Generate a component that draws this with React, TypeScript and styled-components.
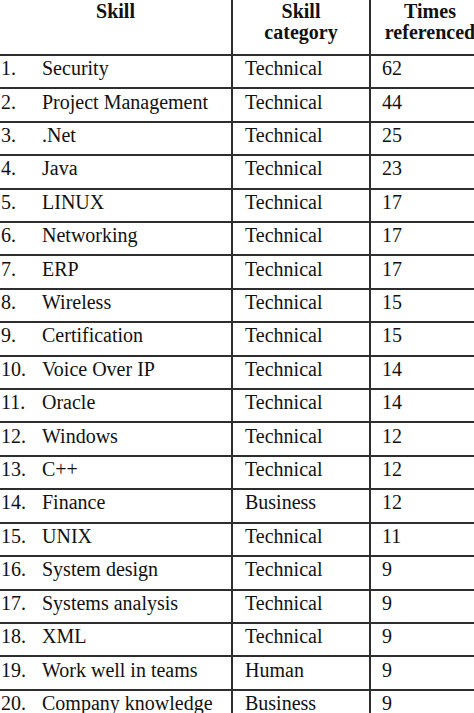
import { Fragment } from "react";
import styled, { createGlobalStyle } from "styled-components";

const GlobalStyle = createGlobalStyle`
  html, body {
    margin: 0;
    padding: 0;
    background: #ffffff;
    overflow: hidden;
  }
  body {
    font-family: "Liberation Serif", "Times New Roman", serif;
    color: #111;
  }
`;

interface SkillRow {
  skill: string;
  category: string;
  count: number;
}

const rows: SkillRow[] = [
  { skill: "Security", category: "Technical", count: 62 },
  { skill: "Project Management", category: "Technical", count: 44 },
  { skill: ".Net", category: "Technical", count: 25 },
  { skill: "Java", category: "Technical", count: 23 },
  { skill: "LINUX", category: "Technical", count: 17 },
  { skill: "Networking", category: "Technical", count: 17 },
  { skill: "ERP", category: "Technical", count: 17 },
  { skill: "Wireless", category: "Technical", count: 15 },
  { skill: "Certification", category: "Technical", count: 15 },
  { skill: "Voice Over IP", category: "Technical", count: 14 },
  { skill: "Oracle", category: "Technical", count: 14 },
  { skill: "Windows", category: "Technical", count: 12 },
  { skill: "C++", category: "Technical", count: 12 },
  { skill: "Finance", category: "Business", count: 12 },
  { skill: "UNIX", category: "Technical", count: 11 },
  { skill: "System design", category: "Technical", count: 9 },
  { skill: "Systems analysis", category: "Technical", count: 9 },
  { skill: "XML", category: "Technical", count: 9 },
  { skill: "Work well in teams", category: "Human", count: 9 },
  { skill: "Company knowledge", category: "Business", count: 9 },
];

const Table = styled.div`
  display: grid;
  grid-template-columns: 233px 138px 118px;
  grid-template-rows: 56px;
  grid-auto-rows: 33.42px;
  width: 489px;
  font-size: 20px;
`;

const Cell = styled.div<{ $last?: boolean }>`
  display: flex;
  align-items: center;
  box-sizing: border-box;
  border-bottom: 2px solid #2e2e2e;
  border-right: ${(p) => (p.$last ? "none" : "2px solid #2e2e2e")};
  padding: 0 0 6px 12px;
  white-space: nowrap;
`;

const HeadCell = styled(Cell)`
  align-items: flex-start;
  justify-content: center;
  text-align: center;
  font-weight: bold;
  line-height: 21px;
  padding: 1px 0 0 0;
`;

const SkillCell = styled(Cell)`
  padding-left: 0;
`;

const Num = styled.span`
  display: inline-block;
  width: 42px;
  padding-left: 1px;
  box-sizing: border-box;
`;

const CountCell = styled(Cell)`
  padding-left: 11px;
`;

export default function App() {
  return (
    <>
      <GlobalStyle />
      <Table>
        <HeadCell>Skill</HeadCell>
        <HeadCell>
          Skill
          <br />
          category
        </HeadCell>
        <HeadCell $last>
          Times
          <br />
          referenced
        </HeadCell>
        {rows.map((r, i) => (
          <Fragment key={i}>
            <SkillCell>
              <Num>{i + 1}.</Num>
              {r.skill}
            </SkillCell>
            <Cell>{r.category}</Cell>
            <CountCell $last>{r.count}</CountCell>
          </Fragment>
        ))}
      </Table>
    </>
  );
}
